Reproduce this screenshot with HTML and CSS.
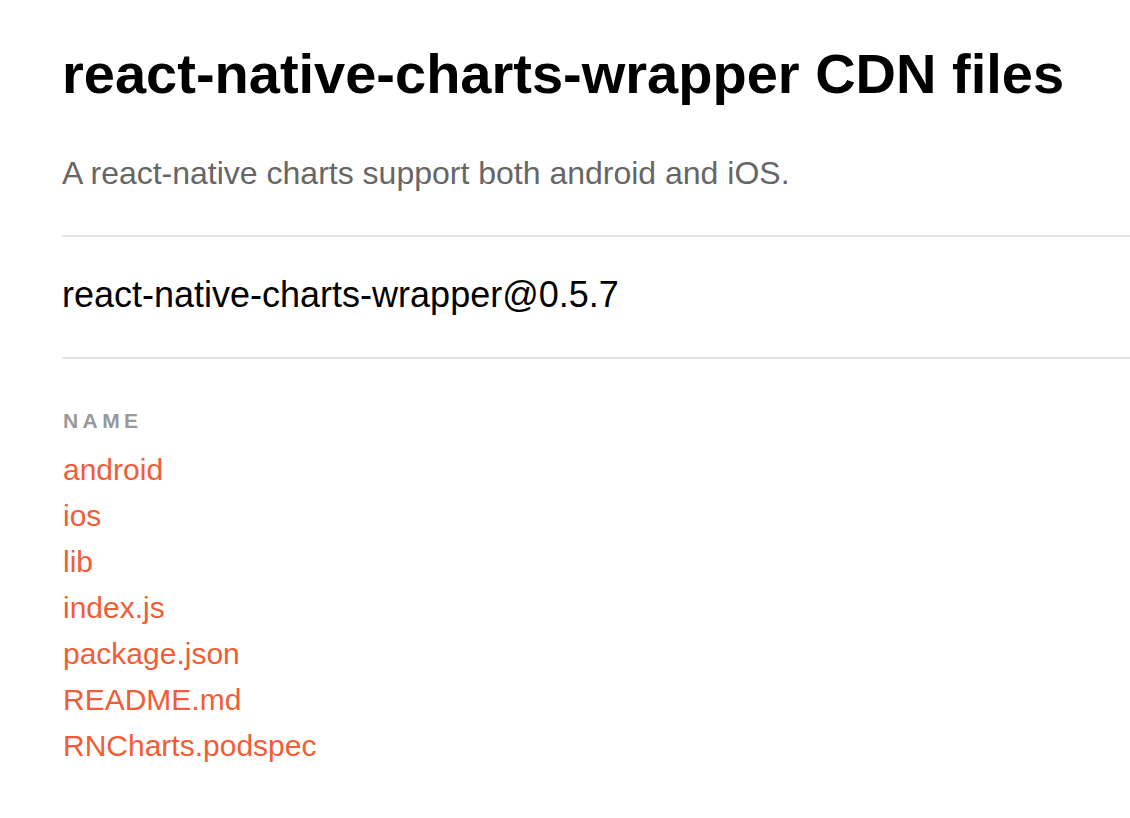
FILE: index.html
```html
<!DOCTYPE html>
<html lang="en">
<head>
<meta charset="utf-8">
<title>react-native-charts-wrapper CDN files</title>
<link rel="stylesheet" href="styles.css">
</head>
<body>
<main class="page">
  <h1 class="title">react-native-charts-wrapper CDN files</h1>
  <p class="subtitle">A react-native charts support both android and iOS.</p>
  <hr class="rule rule-first">
  <div class="version">react-native-charts-wrapper@0.5.7</div>
  <hr class="rule rule-second">
  <div class="listing">
    <div class="col-head">NAME</div>
    <ul class="files">
      <li><a href="#">android</a></li>
      <li><a href="#">ios</a></li>
      <li><a href="#">lib</a></li>
      <li><a href="#">index.js</a></li>
      <li><a href="#">package.json</a></li>
      <li><a href="#">README.md</a></li>
      <li><a href="#">RNCharts.podspec</a></li>
    </ul>
  </div>
</main>
</body>
</html>
```
FILE: styles.css
```css
html, body {
  margin: 0;
  padding: 0;
  background: #fff;
}
body {
  font-family: "Liberation Sans", Arial, Helvetica, sans-serif;
  color: #000;
}
.page {
  padding: 40px 0 40px 62px;
}
.title {
  margin: 0;
  font-size: 56px;
  line-height: 68px;
  font-weight: bold;
}
.subtitle {
  margin: 45px 0 0;
  font-size: 32px;
  line-height: 40px;
  color: #666;
}
.rule {
  border: 0;
  height: 2px;
  background: #e5e5e5;
  margin: 0;
}
.rule-first {
  margin-top: 42px;
}
.version {
  margin-top: 36px;
  font-size: 36px;
  line-height: 44px;
}
.rule-second {
  margin-top: 40px;
}
.col-head {
  margin-top: 50px;
  padding-left: 1px;
  font-size: 21px;
  line-height: 24px;
  font-weight: bold;
  color: #999;
  letter-spacing: 4.4px;
}
.files {
  list-style: none;
  margin: 14px 0 0;
  padding: 0 0 0 1px;
}
.files li {
  font-size: 30px;
  line-height: 46px;
}
.files a {
  color: #f05d36;
  text-decoration: none;
}
```
